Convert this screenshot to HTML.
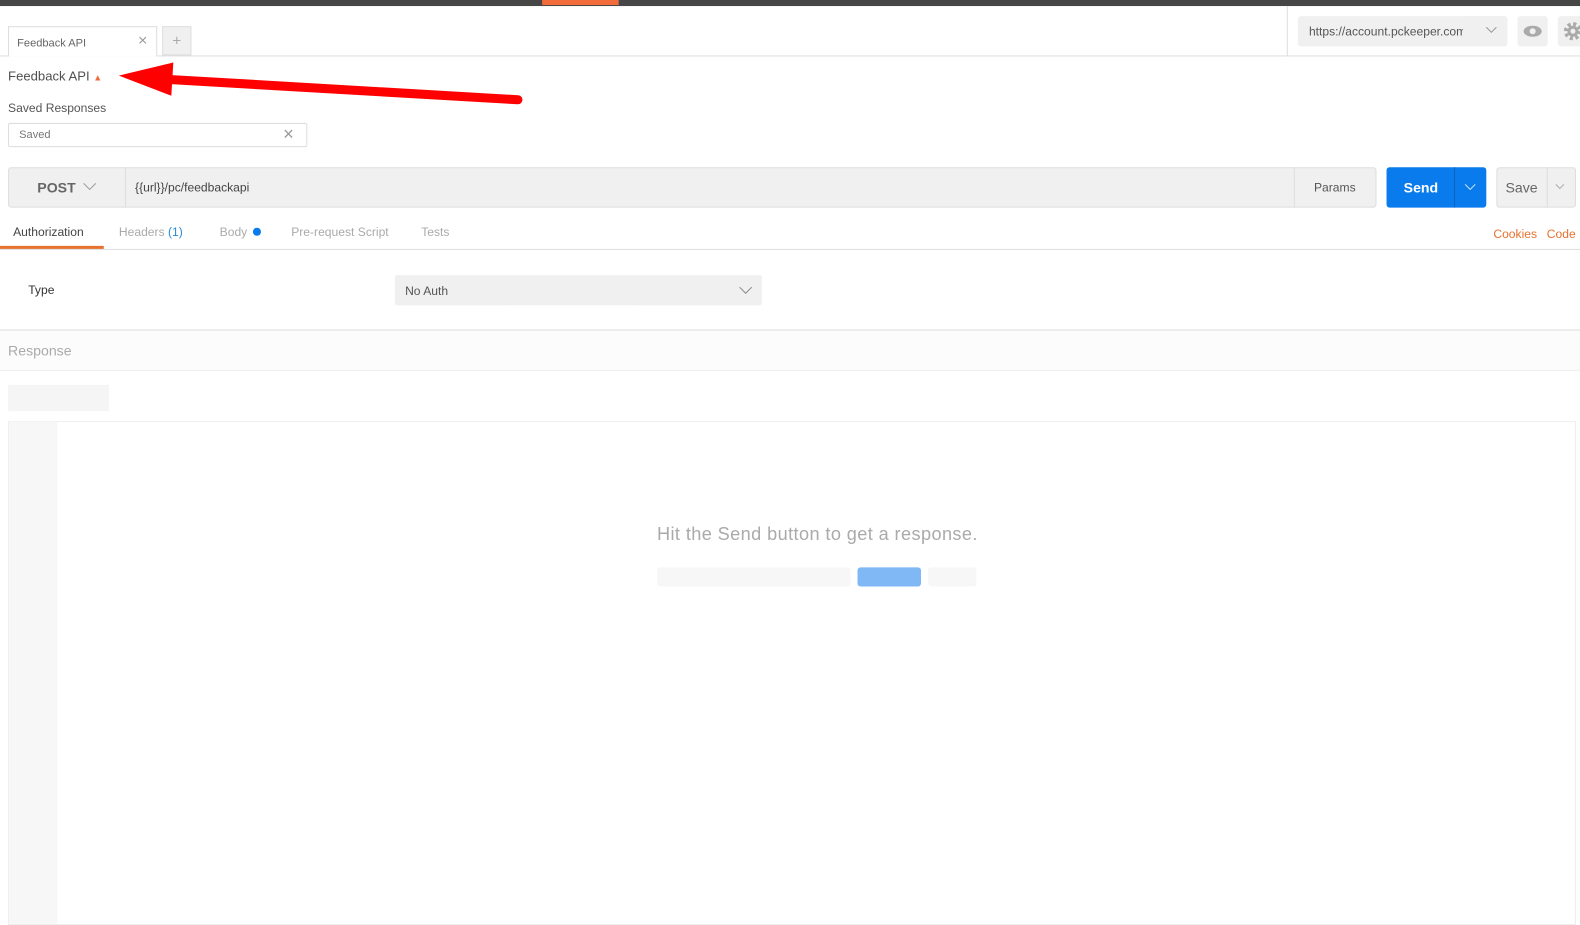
<!DOCTYPE html>
<html><head><style>
*{box-sizing:border-box;margin:0;padding:0}
body{width:1580px;height:925px;background:#fff;font-family:"Liberation Sans",sans-serif;position:relative;overflow:hidden;color:#505050}
#w{position:absolute;left:0;top:0;width:1568px;height:918px;transform:scale(1.00766);transform-origin:0 0}
.a{position:absolute}
</style></head><body><div id="w">
<div class="a" style="left:0;top:0;width:1580px;height:6px;background:#464646"></div>
<div class="a" style="top:0;left:538px;width:76px;height:5px;background:#f26b3a"></div>
<div class="a" style="left:0;top:55px;width:1580px;height:1px;background:#ddd"></div>
<div class="a" style="left:1277px;top:6px;width:1px;height:50px;background:#ddd"></div>
<div class="a" style="left:8px;top:26px;width:148px;height:30px;border:1px solid #ddd;border-bottom:none;background:#fff;font-size:11px;padding:10px 0 0 8px;color:#666">Feedback API<span class="a" style="left:128px;top:5px;font-size:16px;color:#999">×</span></div>
<div class="a" style="left:161px;top:26px;width:29px;height:29px;border:1px solid #ddd;background:#f0f0f0;text-align:center;font-size:15px;line-height:27px;color:#aaa">+</div>
<div class="a" style="left:1288px;top:16px;width:208px;height:30px;background:#f0f0f0;border-radius:3px;font-size:12px;padding:8px 0 0 11px;color:#555;overflow:hidden;white-space:nowrap">https://account.pckeeper.com<span class="a" style="left:164px;top:0;width:44px;height:30px;background:#f0f0f0"></span><svg class="a" style="left:186px;top:10px" width="12" height="8"><path d="M1 1l5 5 5-5" stroke="#999" fill="none"/></svg></div>
<div class="a" style="left:1506px;top:16px;width:30px;height:30px;background:#f0f0f0;border-radius:3px"><svg width="30" height="30"><ellipse cx="15" cy="15" rx="9" ry="5.5" fill="#aaa"/><circle cx="15" cy="15" r="3" fill="#f0f0f0"/></svg></div>
<div class="a" style="left:1546px;top:16px;width:34px;height:30px;background:#f0f0f0;border-radius:3px"><svg width="30" height="30"><circle cx="15" cy="15" r="7" fill="none" stroke="#aaa" stroke-width="4" stroke-dasharray="3 2.5"/><circle cx="15" cy="15" r="4" fill="none" stroke="#aaa" stroke-width="3"/></svg></div>
<div class="a" style="left:8px;top:68px;font-size:13px;color:#505050">Feedback API <span style="color:#f26b3a;font-size:9px">▲</span></div>
<svg class="a" style="left:0;top:0" width="530" height="110"><path d="M170 79L514 99" stroke="#f00" stroke-width="9" stroke-linecap="round"/><path d="M118 75L172 62L170 95Z" fill="#f00"/></svg>
<div class="a" style="left:8px;top:100px;font-size:12px;color:#555">Saved Responses</div>
<div class="a" style="left:8px;top:122px;width:297px;height:24px;border:1px solid #ddd;border-radius:2px;font-size:11px;padding:5px 0 0 10px;color:#777">Saved<span class="a" style="left:272px;top:0px;font-size:18px;color:#999">×</span></div>
<div class="a" style="left:8px;top:166px;width:1358px;height:40px;background:#f0f0f0;border:1px solid #ddd;border-radius:3px"></div>
<div class="a" style="left:124px;top:166px;width:1px;height:40px;background:#ddd"></div>
<div class="a" style="left:1284px;top:166px;width:1px;height:40px;background:#ddd"></div>
<div class="a" style="left:37px;top:178px;font-size:14px;font-weight:bold;color:#666">POST</div>
<svg class="a" style="left:82px;top:181px" width="14" height="9"><path d="M1 1l6 6 6-6" stroke="#999" fill="none"/></svg>
<div class="a" style="left:134px;top:179px;font-size:12px;color:#444">{{url}}/pc/feedbackapi</div>
<div class="a" style="left:1304px;top:179px;font-size:12px;color:#555">Params</div>
<div class="a" style="left:1376px;top:166px;width:99px;height:40px;background:#097bed;border-radius:3px"></div>
<div class="a" style="left:1443px;top:166px;width:1px;height:40px;background:#0a63c0"></div>
<div class="a" style="left:1393px;top:178px;font-size:14px;font-weight:bold;color:#fff">Send</div>
<svg class="a" style="left:1453px;top:182px" width="12" height="8"><path d="M1 1l5 5 5-5" stroke="#cfe3fb" fill="none"/></svg>
<div class="a" style="left:1485px;top:166px;width:79px;height:40px;background:#f0f0f0;border:1px solid #ddd;border-radius:3px"></div>
<div class="a" style="left:1535px;top:166px;width:1px;height:40px;background:#ddd"></div>
<div class="a" style="left:1494px;top:178px;font-size:14px;color:#666">Save</div>
<svg class="a" style="left:1543px;top:182px" width="10" height="6"><path d="M1 1l4 4 4-4" stroke="#aaa" fill="none"/></svg>
<div class="a" style="left:0;top:247px;width:1580px;height:1px;background:#ddd"></div>
<div class="a" style="left:0;top:244px;width:103px;height:3px;background:#e6722f"></div>
<div class="a" style="left:13px;top:223px;font-size:12px;color:#444">Authorization</div>
<div class="a" style="left:118px;top:223px;font-size:12px;color:#aaa">Headers <span style="color:#2a8ad6">(1)</span></div>
<div class="a" style="left:218px;top:223px;font-size:12px;color:#aaa">Body</div>
<div class="a" style="left:251px;top:226px;width:8px;height:8px;border-radius:50%;background:#097bed"></div>
<div class="a" style="left:289px;top:223px;font-size:12px;color:#aaa">Pre-request Script</div>
<div class="a" style="left:418px;top:223px;font-size:12px;color:#aaa">Tests</div>
<div class="a" style="left:1482px;top:225px;font-size:12px;color:#e6722f">Cookies</div>
<div class="a" style="left:1535px;top:225px;font-size:12px;color:#e6722f">Code</div>
<div class="a" style="left:28px;top:281px;font-size:12px;color:#333">Type</div>
<div class="a" style="left:392px;top:273px;width:364px;height:30px;background:#f0f0f0;border-radius:2px;font-size:12px;padding:9px 0 0 10px;color:#555">No Auth<svg class="a" style="left:341px;top:11px" width="14" height="9"><path d="M1 1l6 6 6-6" stroke="#888" fill="none"/></svg></div>
<div class="a" style="left:0;top:327px;width:1580px;height:1px;background:#ddd"></div>
<div class="a" style="left:0;top:328px;width:1580px;height:40px;background:#fcfcfc;border-bottom:1px solid #eee"></div>
<div class="a" style="left:8px;top:340px;font-size:14px;color:#aaa">Response</div>
<div class="a" style="left:8px;top:382px;width:100px;height:26px;background:#f5f5f5"></div>
<div class="a" style="left:8px;top:418px;width:1556px;height:500px;border:1px solid #eee"></div>
<div class="a" style="left:9px;top:419px;width:48px;height:498px;background:#f7f7f7"></div>
<div class="a" style="left:652px;top:520px;font-size:18px;letter-spacing:0.4px;color:#aaa">Hit the Send button to get a response.</div>
<div class="a" style="left:652px;top:563px;width:192px;height:19px;background:#f7f7f7;border-radius:3px"></div>
<div class="a" style="left:851px;top:563px;width:63px;height:19px;background:#7fb8f5;border-radius:3px"></div>
<div class="a" style="left:921px;top:563px;width:48px;height:19px;background:#f7f7f7;border-radius:3px"></div>
</div></body></html>
